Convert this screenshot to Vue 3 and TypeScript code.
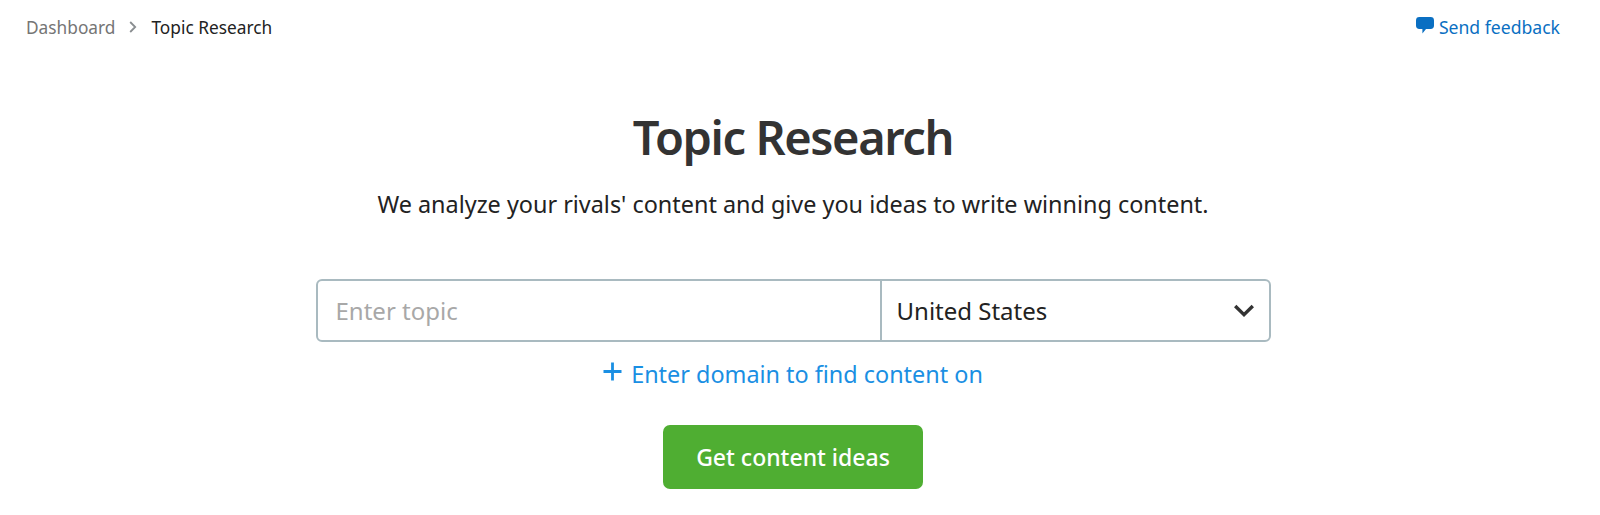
<script setup lang="ts">
const crumbs = { parent: 'Dashboard', current: 'Topic Research' }
</script>

<template>
  <div class="page">
    <header class="topbar">
      <nav class="crumbs">
        <span class="crumb-parent">{{ crumbs.parent }}</span>
        <svg class="crumb-sep" width="8" height="12" viewBox="0 0 8 12"><path d="M1.2 1 6.2 6l-5 5" fill="none" stroke="#8a8e91" stroke-width="1.8"/></svg>
        <span class="crumb-current">{{ crumbs.current }}</span>
      </nav>
      <a class="feedback">
        <svg width="18" height="17" viewBox="0 0 18 17"><path d="M3.4 0h11.2A3.4 3.4 0 0 1 18 3.4v5.2A3.4 3.4 0 0 1 14.6 12H10l-3.6 4.6V12h-3A3.4 3.4 0 0 1 0 8.6V3.4A3.4 3.4 0 0 1 3.4 0z" fill="#0a6fc2"/></svg>
        <span>Send feedback</span>
      </a>
    </header>
    <main class="hero">
      <h1 class="title">Topic Research</h1>
      <p class="lead">We analyze your rivals' content and give you ideas to write winning content.</p>
      <div class="search">
        <div class="topic">Enter topic</div>
        <div class="country">
          <span>United States</span>
          <svg width="20" height="13" viewBox="0 0 20 13"><path d="M1.2 2l8.800 8.600L18.800 2" fill="none" stroke="#333" stroke-width="3.400"/></svg>
        </div>
      </div>
      <a class="domain">
        <svg width="19" height="19" viewBox="0 0 19 19"><path d="M9.500 0.500v18M0.500 9.500h18" fill="none" stroke="#1a8fe3" stroke-width="2.800"/></svg>
        <span>Enter domain to find content on</span>
      </a>
      <button class="cta">Get content ideas</button>
    </main>
  </div>
</template>

<style>
body { margin: 0; background: #fff; }
</style>

<style scoped>
.page {
  width: 1586px;
  height: 515px;
  font-family: "Noto Sans", "Open Sans", sans-serif;
  overflow: hidden;
  color: #222;
}
.topbar {
  display: flex;
  justify-content: space-between;
  align-items: center;
  padding: 16px 26px 0 26px;
  height: 22px;
}
.crumbs { display: flex; align-items: center; font-size: 17.300px; }
.crumb-parent { color: #757575; }
.crumb-sep { margin: 0 14px 0 14px; }
.crumb-current { color: #222; }
.feedback { display: flex; align-items: center; gap: 5px; font-size: 17.600px; color: #0a6fc2; }
.feedback svg { margin-top: -4px; }
.hero { display: flex; flex-direction: column; align-items: center; }
.title {
  margin: 68px 0 0;
  font-size: 47px;
  line-height: 62px;
  font-weight: 600;
  letter-spacing: -1.400px;
  color: #333;
}
.lead {
  margin: 20px 0 0;
  font-size: 23.400px;
  line-height: 32px;
  color: #222;
}
.search {
  margin-top: 59px;
  width: 955px;
  height: 63px;
  box-sizing: border-box;
  display: flex;
  border: 2px solid #a9bac0;
  border-radius: 6px;
  font-size: 24px;
}
.topic {
  width: 564px;
  box-sizing: border-box;
  padding-left: 18px;
  display: flex;
  align-items: center;
  color: #a8a8a8;
  border-right: 2px solid #a9bac0;
}
.country {
  flex: 1;
  display: flex;
  align-items: center;
  justify-content: space-between;
  padding: 0 15px 0 15px;
  color: #222;
}
.domain {
  margin-top: 15px;
  display: flex;
  align-items: center;
  gap: 9px;
  font-size: 23.400px;
  line-height: 34px;
  color: #1a8fe3;
}
.domain svg { margin-top: -6px; }
.cta {
  margin-top: 34px;
  width: 260px;
  height: 64px;
  border: 0;
  border-radius: 7px;
  background: #4fae32;
  color: #fff;
  font: 500 23px "Noto Sans", "Open Sans", sans-serif;
}
</style>
